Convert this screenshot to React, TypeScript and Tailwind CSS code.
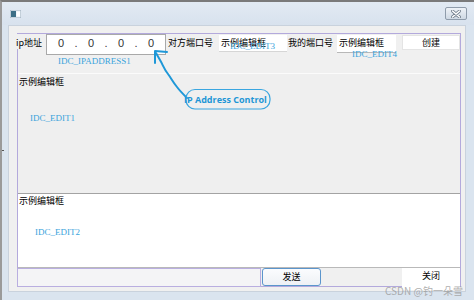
import React from 'react';

const cjk = { fontFamily: '"Noto Sans CJK SC", "Liberation Sans", sans-serif' };
const idc = { fontFamily: '"Liberation Serif", serif' };

const IdcLabel: React.FC<{ text: string; className?: string }> = ({ text, className = '' }) => (
  <span style={idc} className={`text-[9px] leading-[10px] text-[#3aa3dc] whitespace-nowrap ${className}`}>
    {text}
  </span>
);

const IpBox: React.FC = () => {
  const parts = ['0', '.', '0', '.', '0', '.', '0'];
  return (
    <div className="w-[120px] h-[21px] bg-white border border-[#a9a9a9] flex items-center pl-[1px] text-[11px] text-[#333]" style={{ fontFamily: '"Liberation Sans", sans-serif' }}>
      {parts.map((p, i) => (
        <span key={i} className={`${p === '.' ? 'w-[4px]' : 'w-[26px]'} text-center leading-[14px] -mt-[3px]`}>
          {p}
        </span>
      ))}
    </div>
  );
};

export default function App() {
  return (
    <div className="relative w-[474px] h-[300px] overflow-hidden bg-[#dae4ef] border-t-2 border-l-2 border-t-[#7a7a7a] border-l-[#9a9a9a] flex flex-col" style={cjk}>
      {/* title bar */}
      <div className="h-[23px] flex items-center justify-between pl-[8px] pr-[7px] bg-gradient-to-b from-[#e2eaf3] to-[#d8e2ee]">
        <svg width="11" height="8" viewBox="0 0 11 8">
          <rect x="0" y="0" width="11" height="8" fill="#e8eef4" stroke="#8fa3b5" strokeWidth="0.8" />
          <rect x="1" y="1" width="5" height="6" fill="#3d6f86" />
          <rect x="6.5" y="1.5" width="3.5" height="5" fill="#ffffff" />
        </svg>
        <div className="w-[22px] h-[13px] rounded-[2px] border border-[#8f9cab] bg-gradient-to-b from-[#eef2f7] to-[#cfd9e4] flex items-center justify-center">
          <svg width="10" height="8" viewBox="0 0 10 8">
            <path d="M1.5 1 L8.5 7 M8.5 1 L1.5 7" stroke="#6f7c8a" strokeWidth="3" strokeLinecap="round" />
            <path d="M1.5 1 L8.5 7 M8.5 1 L1.5 7" stroke="#ffffff" strokeWidth="1.6" strokeLinecap="round" />
          </svg>
        </div>
      </div>

      {/* client area */}
      <div className="ml-[6px] w-[458px] h-[267px] bg-[#f0f0f0] border border-[#c9d2dd] pl-[8px] pt-[7px]">
        <div className="w-[444px] h-[254px] border border-[#b3a9dc] flex flex-col">
          {/* top row */}
          <div className="h-[39px] flex items-start text-[9px] leading-[12px] text-black">
            <span className="-ml-[2px] w-[30px] pt-[3px] bg-[#f0f0f0]">ip地址</span>
            <div className="flex flex-col">
              <IpBox />
              <IdcLabel text="IDC_IPADDRESS1" className="ml-[12px] mt-[1px]" />
            </div>
            <span className="ml-[2px] w-[51px] pt-[3px]">对方端口号</span>
            <div className="relative mt-[1px] w-[68px] h-[17px] bg-white border-b border-[#d6d6d6] pl-[2px] pt-[2px]">
              <span>示例编辑框</span>
              <IdcLabel text="IDC_EDIT3" className="absolute left-[11px] top-[6px]" />
            </div>
            <span className="ml-[1px] w-[49px] pt-[3px]">我的端口号</span>
            <div className="relative mt-[1px] w-[59px] h-[18px] bg-white border-b border-[#b8b8b8] pl-[2px] pt-[2px]">
              <span>示例编辑框</span>
              <IdcLabel text="IDC_EDIT4" className="absolute left-[15px] top-[14px]" />
            </div>
            <button className="ml-[6px] mt-[1px] w-[58px] h-[15px] bg-white border border-[#e4e4e4] text-[9px] leading-[12px] text-black">
              创建
            </button>
          </div>

          {/* edit 1 */}
          <div className="h-[120px] bg-[#efefef] border-t border-[#fbfbfb] flex flex-col pl-[1px] pt-[2px] text-[9px] leading-[12px] text-black">
            <span>示例编辑框</span>
            <IdcLabel text="IDC_EDIT1" className="ml-[11px] mt-[25px]" />
          </div>

          {/* edit 2 */}
          <div className="h-[74px] bg-white border-t border-[#a3a3a3] flex flex-col pl-[1px] pt-[1px] text-[9px] leading-[12px] text-black">
            <span>示例编辑框</span>
            <IdcLabel text="IDC_EDIT2" className="ml-[16px] mt-[20px]" />
          </div>

          {/* bottom row */}
          <div className="h-[19px] flex items-start border-t border-[#b9b9b9]">
            <div className="-ml-[1px] w-[244px] h-[19px] bg-[#f4f4f6] border border-[#b9aee0]" />
            <button className="ml-[1px] w-[59px] h-[18px] rounded-[3px] border border-[#5b95cc] bg-gradient-to-b from-[#fbfcfe] to-[#eef1f5] text-[9px] leading-[12px] text-black">
              发送
            </button>
            <button className="ml-[81px] w-[58px] h-[22px] bg-white text-[9px] leading-[12px] text-black pb-[6px]">
              关闭
            </button>
          </div>
        </div>
      </div>

      {/* left frame tick */}
      <div className="absolute left-[-2px] top-[148px] w-[4px] h-[1px] bg-[#555]" />

      {/* annotation: arrow + bubble */}
      <svg className="absolute left-0 top-0 pointer-events-none" width="474" height="300" viewBox="0 0 474 300">
        <path d="M185 96 C181 92 178 89 175 85 C171 80 169 76 166 72 C162 67 161 63 158 58 L154 51" fill="none" stroke="#1f98d8" strokeWidth="2" strokeLinecap="round" />
        <path d="M165 50 L153 49 L153 61" fill="none" stroke="#1f98d8" strokeWidth="2" strokeLinecap="round" strokeLinejoin="round" />
        <rect x="184" y="87.5" width="84" height="19.5" rx="9" fill="none" stroke="#3aa6e0" strokeWidth="1.2" />
      </svg>
      <span className="absolute left-[182px] top-[92px] text-[9px] leading-[12px] font-bold text-[#1d96d6] whitespace-nowrap" style={{ fontFamily: '"Open Sans", "Liberation Sans", sans-serif' }}>
        IP Address Control
      </span>

      {/* watermark */}
      <span className="absolute left-[383px] top-[283px] text-[10px] leading-[12px] text-[#9a9a9a]/80 whitespace-nowrap">
        CSDN @钓一朵雪
      </span>
    </div>
  );
}
